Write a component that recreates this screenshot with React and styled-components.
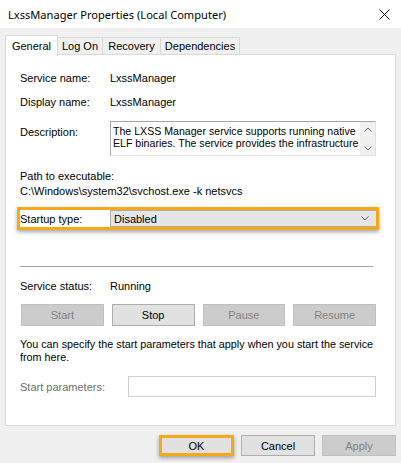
import styled, { createGlobalStyle } from "styled-components";

const GlobalStyle = createGlobalStyle`
  html, body {
    margin: 0;
    padding: 0;
    background: #f0f0f0;
  }
  * {
    box-sizing: border-box;
  }
`;

const ORANGE = "#f6a817";

const Window = styled.div`
  width: 401px;
  height: 463px;
  background: #f0f0f0;
  font-family: "Liberation Sans", Arial, sans-serif;
  font-size: 11px;
  color: #000;
  display: flex;
  flex-direction: column;
  overflow: hidden;
`;

const TitleBar = styled.div`
  height: 28px;
  background: #fff;
  display: flex;
  align-items: center;
  justify-content: space-between;
  padding: 0 11px 0 8px;
`;

const Title = styled.span`
  font-family: "Noto Sans", "Open Sans", sans-serif;
  font-size: 11.1px;
  color: #000;
`;

const Body = styled.div`
  padding: 7px 5px 0 5px;
  display: flex;
  flex-direction: column;
`;

const TabStrip = styled.div`
  display: flex;
  align-items: flex-end;
  height: 20px;
  position: relative;
  z-index: 1;
`;

const Tab = styled.div`
  width: ${(p) => p.$w}px;
  height: ${(p) => (p.$active ? "21px" : "18px")};
  margin-bottom: ${(p) => (p.$active ? "-1px" : "0")};
  background: ${(p) => (p.$active ? "#fff" : "#f0f0f0")};
  border: 1px solid #d9d9d9;
  border-bottom: ${(p) => (p.$active ? "none" : "1px solid #d9d9d9")};
  margin-left: ${(p) => (p.$first ? "0" : "-1px")};
  display: flex;
  align-items: center;
  justify-content: center;
  font-size: 11px;
  white-space: nowrap;
`;

const Panel = styled.div`
  height: 372px;
  background: #fff;
  border: 1px solid #d9d9d9;
  margin-top: -1px;
  padding: 11px 14px 0 14px;
  display: flex;
  flex-direction: column;
`;

const Row = styled.div`
  display: flex;
  align-items: ${(p) => (p.$top ? "flex-start" : "center")};
  height: ${(p) => (p.$h ? `${p.$h}px` : "24px")};
  margin-top: ${(p) => p.$mt || 0}px;
`;

const Label = styled.span`
  width: 90px;
  flex-shrink: 0;
  color: ${(p) => (p.$disabled ? "#6d6d6d" : "#000")};
  padding-top: ${(p) => p.$pt || 0}px;
`;

const DescBox = styled.div`
  width: 266px;
  height: 35px;
  border: 1px solid #a5a5a5;
  border-right-color: #e3e3e3;
  border-bottom-color: #e3e3e3;
  display: flex;
`;

const DescText = styled.div`
  flex: 1;
  padding: 3px 0 0 2px;
  line-height: 12px;
  font-size: 10.6px;
  white-space: nowrap;
  overflow: hidden;
`;

const ScrollBar = styled.div`
  width: 15px;
  background: #f0f0f0;
  display: flex;
  flex-direction: column;
  justify-content: space-between;
  align-items: center;
  padding: 5px 0 4px;
`;

const PathBlock = styled.div`
  margin-top: 13px;
  line-height: 15px;
`;

const StartupBox = styled.div`
  margin: 8px 0 0 -3px;
  width: 362px;
  height: 23px;
  border: 3px solid ${ORANGE};
  box-shadow: 0 2px 4px rgba(0, 0, 0, 0.35);
  display: flex;
  align-items: stretch;
  background: #fff;
`;

const StartupLabel = styled.span`
  width: 90px;
  display: flex;
  align-items: center;
`;

const Select = styled.div`
  flex: 1;
  background: #e5e5e5;
  border: 1px solid #adadad;
  border-right: none;
  display: flex;
  align-items: center;
  justify-content: space-between;
  padding: 0 7px 0 3px;
`;

const Separator = styled.div`
  margin-top: 36px;
  width: 353px;
  height: 1px;
  background: #a0a0a0;
`;

const ButtonGrid = styled.div`
  margin: 6px 0 0 1px;
  width: 355px;
  display: grid;
  grid-template-columns: repeat(4, 1fr);
  gap: 8px;
`;

const Button = styled.div`
  height: 22px;
  display: flex;
  align-items: center;
  justify-content: center;
  background: ${(p) => (p.$disabled ? "#cccccc" : "#e1e1e1")};
  border: 1px solid ${(p) => (p.$disabled ? "#bfbfbf" : "#adadad")};
  color: ${(p) => (p.$disabled ? "#838383" : "#000")};
  font-size: 11px;
`;

const Paragraph = styled.p`
  margin: 12px 0 0 0;
  width: 360px;
  line-height: 13px;
  font-size: 10.8px;
  white-space: nowrap;
`;

const Input = styled.div`
  width: 248px;
  height: 21px;
  border: 1px solid #cfcfcf;
  background: #fff;
  margin-left: 18px;
`;

const Footer = styled.div`
  display: flex;
  justify-content: flex-end;
  gap: 7px;
  margin-top: 9px;
`;

const FooterButton = styled(Button)`
  width: 74px;
  height: 21px;
  ${(p) =>
    p.$focused &&
    `
    width: 75px;
    border: 3px solid ${ORANGE};
    box-shadow: 0 2px 4px rgba(0, 0, 0, 0.35);
    background: #e1e1e1;
  `}
`;

function Chevron({ up }) {
  return (
    <svg width="8" height="5" viewBox="0 0 8 5">
      <polyline
        points={up ? "0.5,4.5 4,1 7.5,4.5" : "0.5,0.5 4,4 7.5,0.5"}
        fill="none"
        stroke="#606060"
        strokeWidth="1"
      />
    </svg>
  );
}

function CloseIcon() {
  return (
    <svg width="11" height="11" viewBox="0 0 11 11">
      <path d="M0.5 0.5 L10.5 10.5 M10.5 0.5 L0.5 10.5" stroke="#111" strokeWidth="1" />
    </svg>
  );
}

export default function App() {
  return (
    <>
      <GlobalStyle />
      <Window>
        <TitleBar>
          <Title>LxssManager Properties (Local Computer)</Title>
          <CloseIcon />
        </TitleBar>
        <Body>
          <TabStrip>
            <Tab $active $first $w={53}>General</Tab>
            <Tab $w={46}>Log On</Tab>
            <Tab $w={59}>Recovery</Tab>
            <Tab $w={80}>Dependencies</Tab>
          </TabStrip>
          <Panel>
            <Row>
              <Label>Service name:</Label>
              <span>LxssManager</span>
            </Row>
            <Row>
              <Label>Display name:</Label>
              <span>LxssManager</span>
            </Row>
            <Row $top $h={35} $mt={7}>
              <Label $pt={5}>Description:</Label>
              <DescBox>
                <DescText>
                  The LXSS Manager service supports running native
                  <br />
                  ELF binaries. The service provides the infrastructure
                </DescText>
                <ScrollBar>
                  <Chevron up />
                  <Chevron />
                </ScrollBar>
              </DescBox>
            </Row>
            <PathBlock>
              <div>Path to executable:</div>
              <div>C:\Windows\system32\svchost.exe -k netsvcs</div>
            </PathBlock>
            <StartupBox>
              <StartupLabel>Startup type:</StartupLabel>
              <Select>
                <span>Disabled</span>
                <Chevron />
              </Select>
            </StartupBox>
            <Separator />
            <Row $mt={7}>
              <Label>Service status:</Label>
              <span>Running</span>
            </Row>
            <ButtonGrid>
              <Button $disabled>Start</Button>
              <Button>Stop</Button>
              <Button $disabled>Pause</Button>
              <Button $disabled>Resume</Button>
            </ButtonGrid>
            <Paragraph>
              You can specify the start parameters that apply when you start the service
              <br />
              from here.
            </Paragraph>
            <Row $h={21} $mt={12}>
              <Label $disabled>Start parameters:</Label>
              <Input />
            </Row>
          </Panel>
          <Footer>
            <FooterButton $focused>OK</FooterButton>
            <FooterButton>Cancel</FooterButton>
            <FooterButton $disabled>Apply</FooterButton>
          </Footer>
        </Body>
      </Window>
    </>
  );
}
